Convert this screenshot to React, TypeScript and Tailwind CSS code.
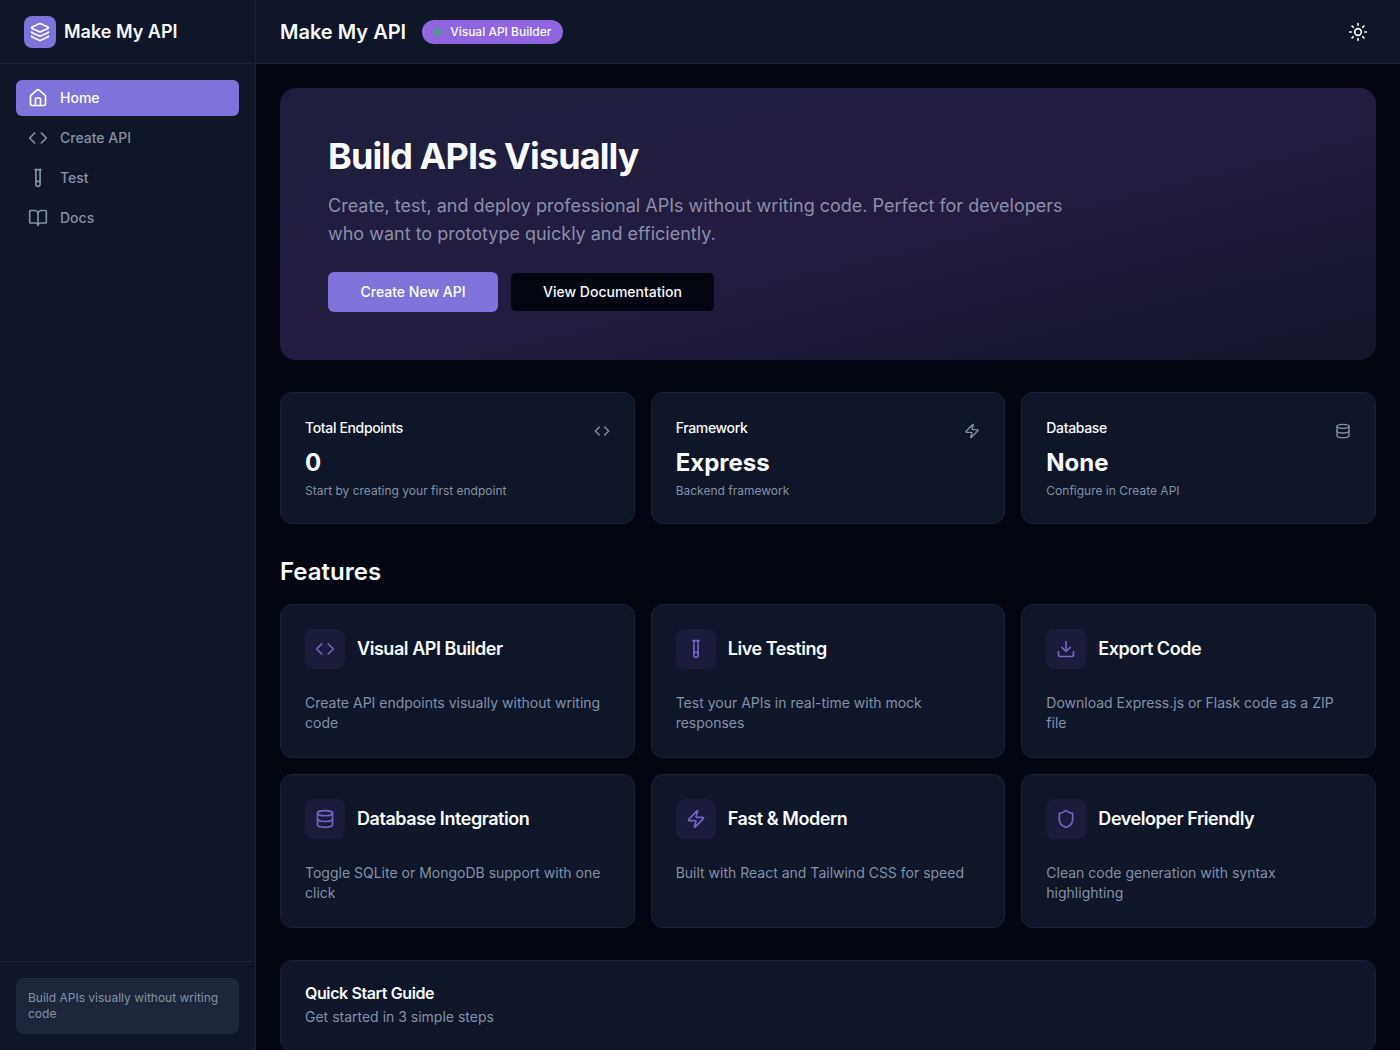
import { BookOpen, Code, Database, Download, House, Layers, Shield, Sun, TestTube, Zap } from "lucide-react"

const nav = [
  { label: "Home", icon: House, active: true },
  { label: "Create API", icon: Code },
  { label: "Test", icon: TestTube },
  { label: "Docs", icon: BookOpen },
]

const stats = [
  { title: "Total Endpoints", value: "0", sub: "Start by creating your first endpoint", icon: Code },
  { title: "Framework", value: "Express", sub: "Backend framework", icon: Zap },
  { title: "Database", value: "None", sub: "Configure in Create API", icon: Database },
]

const features = [
  { title: "Visual API Builder", text: "Create API endpoints visually without writing code", icon: Code },
  { title: "Live Testing", text: "Test your APIs in real-time with mock responses", icon: TestTube },
  { title: "Export Code", text: "Download Express.js or Flask code as a ZIP file", icon: Download },
  { title: "Database Integration", text: "Toggle SQLite or MongoDB support with one click", icon: Database },
  { title: "Fast & Modern", text: "Built with React and Tailwind CSS for speed", icon: Zap },
  { title: "Developer Friendly", text: "Clean code generation with syntax highlighting", icon: Shield },
]

function Sidebar() {
  return (
    <aside className="flex h-full w-[256px] shrink-0 flex-col border-r border-[#1a2436] bg-[#0e1628]">
      <div className="flex h-[64px] items-center gap-2 border-b border-[#1a2436] px-6">
        <div className="flex h-8 w-8 items-center justify-center rounded-lg bg-[#7d73d8]">
          <Layers size={20} className="text-white" />
        </div>
        <span className="text-lg font-semibold text-[#f8fafc]">Make My API</span>
      </div>
      <nav className="flex flex-1 flex-col gap-1 p-4">
        {nav.map((item) => (
          <div
            key={item.label}
            className={
              item.active
                ? "flex h-9 items-center gap-3 rounded-md bg-[#7d73d8] px-3 text-sm font-medium text-white"
                : "flex h-9 items-center gap-3 rounded-md px-3 text-sm font-medium text-[#8491a5]"
            }
          >
            <item.icon size={20} />
            <span>{item.label}</span>
          </div>
        ))}
      </nav>
      <div className="border-t border-[#1a2436] p-4">
        <div className="rounded-lg bg-[#1d2739] p-3 text-xs text-[#8491a5]">Build APIs visually without writing code</div>
      </div>
    </aside>
  )
}

function Header() {
  return (
    <header className="flex h-[64px] shrink-0 items-center justify-between border-b border-[#1a2436] bg-[#0e1628] px-6">
      <div className="flex items-center gap-4">
        <h1 className="text-xl font-semibold text-[#f8fafc]">Make My API</h1>
        <div className="flex h-6 items-center gap-2 rounded-full bg-[#8f66e0] px-3 text-xs font-medium text-[#f8fafc]">
          <span className="h-2 w-2 rounded-full bg-[#4f9a94]"></span>
          Visual API Builder
        </div>
      </div>
      <button className="flex h-9 w-9 items-center justify-center rounded-md text-[#f8fafc]">
        <Sun size={20} />
      </button>
    </header>
  )
}

export default function App() {
  return (
    <div className="flex h-screen overflow-hidden bg-[#030610] font-['Inter',sans-serif] text-[#f8fafc]">
      <Sidebar />
      <div className="flex min-w-0 flex-1 flex-col">
        <Header />
        <main className="flex-1 overflow-hidden p-6">
          <section className="rounded-2xl bg-linear-to-br from-[#1c1f3c] via-[#241c40] to-[#13162a] p-12">
            <h2 className="text-4xl font-bold tracking-tight text-[#f8fafc]">Build APIs Visually</h2>
            <p className="mt-4 max-w-[768px] text-lg leading-7 text-[#8b8fa9]">
              Create, test, and deploy professional APIs without writing code. Perfect for developers who want to prototype quickly and efficiently.
            </p>
            <div className="mt-6 flex items-center gap-3">
              <button className="h-10 w-[170px] rounded-md bg-[#7d73d8] text-sm font-medium text-white">Create New API</button>
              <button className="h-10 w-[205px] rounded-md border border-[#221d3e] bg-[#030610] text-sm font-medium text-[#f8fafc]">View Documentation</button>
            </div>
          </section>

          <section className="mt-8 grid grid-cols-3 gap-4">
            {stats.map((s) => (
              <div key={s.title} className="rounded-xl border border-[#1a2436] bg-[#0e1628] p-6">
                <div className="flex h-[30px] items-start justify-between">
                  <h3 className="mt-px text-sm font-medium tracking-tight text-[#f8fafc]">{s.title}</h3>
                  <s.icon size={16} className="mt-1.5 text-[#8491a5]" />
                </div>
                <div className="text-2xl font-bold text-[#f8fafc]">{s.value}</div>
                <p className="mt-1 text-xs text-[#8491a5]">{s.sub}</p>
              </div>
            ))}
          </section>

          <h2 className="mt-8 text-2xl font-semibold text-[#f8fafc]">Features</h2>
          <section className="mt-4 grid grid-cols-3 gap-4">
            {features.map((f) => (
              <div key={f.title} className="h-[154px] rounded-xl border border-[#1a2436] bg-[#0e1628] p-6">
                <div className="flex items-center gap-3">
                  <div className="flex h-10 w-10 items-center justify-center rounded-lg bg-[#1a1c3a]">
                    <f.icon size={20} className="text-[#6f66cc]" />
                  </div>
                  <h3 className="text-lg font-semibold tracking-tight text-[#f8fafc]">{f.title}</h3>
                </div>
                <p className="mt-6 text-sm text-[#8491a5]">{f.text}</p>
              </div>
            ))}
          </section>

          <section className="mt-8 rounded-xl border border-[#1a2436] bg-[#0e1628] p-6">
            <h3 className="leading-none font-semibold tracking-tight text-[#f8fafc]">Quick Start Guide</h3>
            <p className="mt-1.5 text-sm text-[#8491a5]">Get started in 3 simple steps</p>
          </section>
        </main>
      </div>
    </div>
  )
}
